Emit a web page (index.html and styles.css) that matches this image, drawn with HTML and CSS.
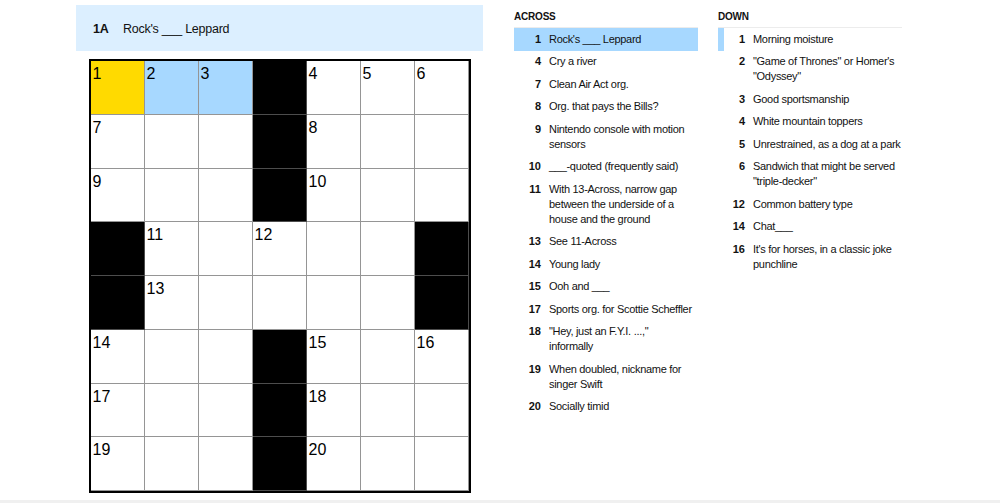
FILE: index.html
```html
<!DOCTYPE html>
<html lang="en">
<head>
    <meta charset="UTF-8">
    <meta name="viewport" content="width=device-width, initial-scale=1.0">
    <title>Mini Crossword</title>
    <link rel="stylesheet" href="styles.css">
</head>
<body>
    <div class="page">
        <div class="board">
            <div class="clue-bar">
                <span class="clue-bar-num">1A</span>
                <span class="clue-bar-text">Rock's ___ Leppard</span>
            </div>
            <div class="grid">
                <!-- row 1 -->
                <div class="cell selected"><span class="num">1</span></div>
                <div class="cell related"><span class="num">2</span></div>
                <div class="cell related"><span class="num">3</span></div>
                <div class="cell black"></div>
                <div class="cell"><span class="num">4</span></div>
                <div class="cell"><span class="num">5</span></div>
                <div class="cell"><span class="num">6</span></div>
                <!-- row 2 -->
                <div class="cell"><span class="num">7</span></div>
                <div class="cell"></div>
                <div class="cell"></div>
                <div class="cell black"></div>
                <div class="cell"><span class="num">8</span></div>
                <div class="cell"></div>
                <div class="cell"></div>
                <!-- row 3 -->
                <div class="cell"><span class="num">9</span></div>
                <div class="cell"></div>
                <div class="cell"></div>
                <div class="cell black"></div>
                <div class="cell"><span class="num">10</span></div>
                <div class="cell"></div>
                <div class="cell"></div>
                <!-- row 4 -->
                <div class="cell black"></div>
                <div class="cell"><span class="num">11</span></div>
                <div class="cell"></div>
                <div class="cell"><span class="num">12</span></div>
                <div class="cell"></div>
                <div class="cell"></div>
                <div class="cell black"></div>
                <!-- row 5 -->
                <div class="cell black"></div>
                <div class="cell"><span class="num">13</span></div>
                <div class="cell"></div>
                <div class="cell"></div>
                <div class="cell"></div>
                <div class="cell"></div>
                <div class="cell black"></div>
                <!-- row 6 -->
                <div class="cell"><span class="num">14</span></div>
                <div class="cell"></div>
                <div class="cell"></div>
                <div class="cell black"></div>
                <div class="cell"><span class="num">15</span></div>
                <div class="cell"></div>
                <div class="cell"><span class="num">16</span></div>
                <!-- row 7 -->
                <div class="cell"><span class="num">17</span></div>
                <div class="cell"></div>
                <div class="cell"></div>
                <div class="cell black"></div>
                <div class="cell"><span class="num">18</span></div>
                <div class="cell"></div>
                <div class="cell"></div>
                <!-- row 8 -->
                <div class="cell"><span class="num">19</span></div>
                <div class="cell"></div>
                <div class="cell"></div>
                <div class="cell black"></div>
                <div class="cell"><span class="num">20</span></div>
                <div class="cell"></div>
                <div class="cell"></div>
            </div>
        </div>

        <div class="clues">
            <div class="clue-list across">
                <h3>Across</h3>
                <ol>
                    <li class="clue active"><span class="n">1</span><span class="t">Rock's ___ Leppard</span></li>
                    <li class="clue"><span class="n">4</span><span class="t">Cry a river</span></li>
                    <li class="clue"><span class="n">7</span><span class="t">Clean Air Act org.</span></li>
                    <li class="clue"><span class="n">8</span><span class="t">Org. that pays the Bills?</span></li>
                    <li class="clue"><span class="n">9</span><span class="t">Nintendo console with motion sensors</span></li>
                    <li class="clue"><span class="n">10</span><span class="t">___-quoted (frequently said)</span></li>
                    <li class="clue"><span class="n">11</span><span class="t">With 13-Across, narrow gap between the underside of a house and the ground</span></li>
                    <li class="clue"><span class="n">13</span><span class="t">See 11-Across</span></li>
                    <li class="clue"><span class="n">14</span><span class="t">Young lady</span></li>
                    <li class="clue"><span class="n">15</span><span class="t">Ooh and ___</span></li>
                    <li class="clue"><span class="n">17</span><span class="t">Sports org. for Scottie Scheffler</span></li>
                    <li class="clue"><span class="n">18</span><span class="t">"Hey, just an F.Y.I. ...," informally</span></li>
                    <li class="clue"><span class="n">19</span><span class="t">When doubled, nickname for singer Swift</span></li>
                    <li class="clue"><span class="n">20</span><span class="t">Socially timid</span></li>
                </ol>
            </div>
            <div class="clue-list down">
                <h3>Down</h3>
                <ol>
                    <li class="clue crossing"><span class="n">1</span><span class="t">Morning moisture</span></li>
                    <li class="clue"><span class="n">2</span><span class="t">"Game of Thrones" or Homer's "Odyssey"</span></li>
                    <li class="clue"><span class="n">3</span><span class="t">Good sportsmanship</span></li>
                    <li class="clue"><span class="n">4</span><span class="t">White mountain toppers</span></li>
                    <li class="clue"><span class="n">5</span><span class="t">Unrestrained, as a dog at a park</span></li>
                    <li class="clue"><span class="n">6</span><span class="t">Sandwich that might be served "triple-decker"</span></li>
                    <li class="clue"><span class="n">12</span><span class="t">Common battery type</span></li>
                    <li class="clue"><span class="n">14</span><span class="t">Chat___</span></li>
                    <li class="clue"><span class="n">16</span><span class="t">It's for horses, in a classic joke punchline</span></li>
                </ol>
            </div>
        </div>
    </div>
    <div class="footer"></div>
</body>
</html>
```

FILE: styles.css
```css
body {
    margin: 0;
    font-family: "Liberation Sans", Arial, sans-serif;
    color: #121212;
    background-color: #fff;
    overflow: hidden;
}

.page {
    display: flex;
    gap: 31px;
    padding: 5px 0 0 76px;
    height: 495px; /* footer starts at 500 */
}

.board {
    width: 407px;
    display: flex;
    flex-direction: column;
    align-items: center;
    gap: 8px;
}

.clue-bar {
    align-self: stretch;
    height: 46px;
    box-sizing: border-box;
    padding: 1px 0 0 17px;
    background-color: #dcefff;
    display: flex;
    align-items: center;
    font-size: 12.5px;
    letter-spacing: -0.25px;
}

.clue-bar-num {
    font-weight: bold;
    width: 30px;
}

/* crossword grid */
.grid {
    display: grid;
    grid-template-columns: repeat(7, 54px);
    grid-template-rows: repeat(8, 53.75px);
    border: 2px solid #000;
}

.cell {
    border-right: 1px solid #959595;
    border-bottom: 1px solid #959595;
    background-color: #fff;
    padding: 5px 0 0 2px;
    box-sizing: border-box;
}

.cell.black {
    background-color: #000;
    border-color: #4d4d4d;
}

.cell.selected {
    background-color: #ffda00;
}

.cell.related {
    background-color: #a7d8ff;
}

.num {
    display: block;
    font-size: 16px;
    line-height: 16px;
    color: #000;
}

/* clue lists */
.clues {
    display: flex;
    gap: 20px;
}

.clue-list {
    width: 184px;
}

.clue-list h3 {
    margin: 0;
    padding-top: 1px;
    font-size: 10px;
    font-weight: bold;
    text-transform: uppercase;
    letter-spacing: -0.2px;
    line-height: 21px;
    border-bottom: 1px solid #ececec;
}

.clue-list ol {
    list-style: none;
    margin: 0;
    padding: 0;
}

.clue {
    display: flex;
    gap: 8px;
    padding: 3.75px 0;
    font-size: 11px;
    line-height: 15px;
    letter-spacing: -0.3px;
}

.across .clue {
    padding-right: 4px;
}

.clue .n {
    width: 27px;
    flex-shrink: 0;
    text-align: right;
    font-weight: bold;
    letter-spacing: 0;
}

.clue .t {
    flex: 1;
}

.clue.active {
    background-color: #a7d8ff;
}

.clue.crossing {
    box-shadow: inset 6px 0 0 #a7d8ff;
}

.footer {
    height: 20px;
    background-color: #f0f0f0;
}
```
